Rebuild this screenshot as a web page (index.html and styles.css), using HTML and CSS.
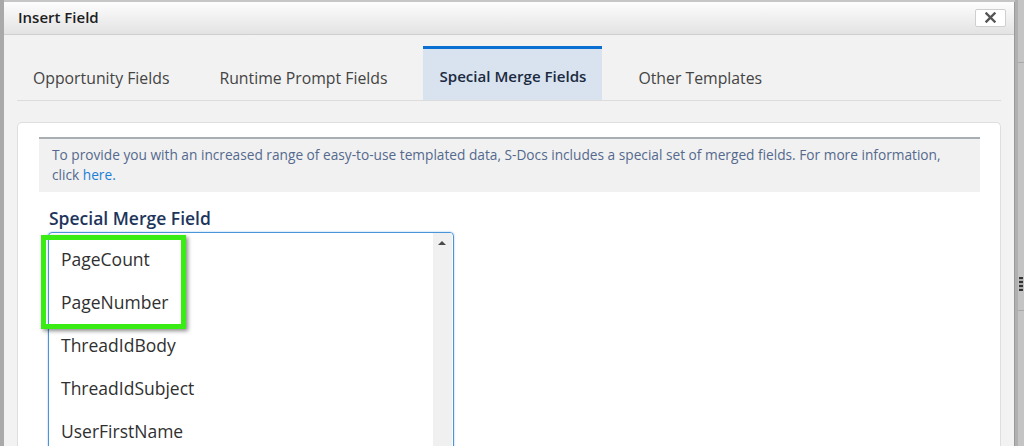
FILE: index.html
```html
<!DOCTYPE html>
<html>
<head>
<meta charset="utf-8">
<link rel="stylesheet" href="styles.css">
</head>
<body>
<div class="edge-left"></div>
<div class="modal">
  <div class="modal-header">
    <span class="modal-title">Insert Field</span>
    <button class="close-btn" aria-label="Close">
      <svg width="11" height="11" viewBox="0 0 11 11"><path d="M1.5 1.5 L9.5 9.5 M9.5 1.5 L1.5 9.5" stroke="#555" stroke-width="2.4" stroke-linecap="square"/></svg>
    </button>
  </div>
  <div class="modal-body">
    <div class="tabs">
      <div class="tab">Opportunity Fields</div>
      <div class="tab">Runtime Prompt Fields</div>
      <div class="tab active">Special Merge Fields</div>
      <div class="tab">Other Templates</div>
    </div>
    <div class="card">
      <div class="info">To provide you with an increased range of easy-to-use templated data, S-Docs includes a special set of merged fields. For more information, click <a href="#" class="link">here.</a></div>
      <div class="field-label">Special Merge Field</div>
      <div class="select-wrap">
        <div class="select">
          <ul class="options">
            <li>PageCount</li>
            <li>PageNumber</li>
            <li>ThreadIdBody</li>
            <li>ThreadIdSubject</li>
            <li>UserFirstName</li>
          </ul>
          <div class="scrollbar"><span class="arrow-up"></span></div>
        </div>
        <div class="highlight"></div>
      </div>
    </div>
  </div>
</div>
<div class="edge-right">
  <div class="er-line er-l1"></div>
  <div class="er-grip"></div>
  <div class="er-line er-l2"></div>
</div>
</body>
</html>
```
FILE: styles.css
```css
* { box-sizing: border-box; }
html, body { margin: 0; padding: 0; height: 100%; overflow: hidden; }
body {
  display: flex;
  background: #c6c6c6;
  font-family: "Open Sans", "Noto Sans", sans-serif;
}
.edge-left { width: 4px; background: #a9a9a9; flex: none; }
.modal {
  width: 1011px;
  flex: none;
  margin-top: 2px;
  background: #f2f2f2;
  border-right: 1px solid #9a9a9a;
  overflow: hidden;
}
.modal-header {
  height: 33px;
  display: flex;
  align-items: center;
  justify-content: space-between;
  padding: 0 8px 0 14px;
  background: linear-gradient(#fdfdfd, #e3e3e3);
  border-bottom: 1px solid #cfcfcf;
}
.modal-title { font-size: 15px; font-weight: 600; color: #1e1e1e; margin-top: -2px; }
.close-btn {
  width: 31px; height: 18px;
  margin-top: -1px;
  border: 1px solid #cfcfcf;
  border-radius: 2px;
  background: #fff;
  display: flex; align-items: center; justify-content: center;
  padding: 0;
}
.modal-body { padding: 11px 13px 0 13px; }
.tabs {
  display: flex;
  gap: 18px;
  border-bottom: 1px solid #dcdcdc;
  height: 55px;
}
.tab {
  padding: 6px 16px 0 16px;
  display: flex;
  align-items: center;
  font-size: 15.8px;
  color: #444;
  border-top: 3px solid transparent;
}
.tab.active {
  background: #d8e3ef;
  border-top-color: #0a6fd1;
  padding-top: 3px;
  color: #1b2a40;
  font-weight: 600;
  font-size: 15.1px;
  margin-left: 2px;
  margin-right: 2px;
}
.card {
  margin-top: 21px;
  background: #fff;
  border: 1px solid #dedede;
  border-bottom: none;
  border-radius: 5px 5px 0 0;
  padding: 14px 20px 0 21px;
  height: 330px;
}
.info {
  background: #f1f1f1;
  border-top: 2px solid #a9aeb3;
  padding: 6px 13px 7px 13px;
  font-size: 13.7px;
  line-height: 20px;
  color: #54698d;
}
.link { color: #1b7fd6; text-decoration: none; }
.field-label {
  margin: 16px 0 0 10px;
  font-size: 17.5px;
  font-weight: 600;
  color: #1e355b;
  line-height: 20px;
}
.select-wrap { position: relative; margin: 4px 0 0 9px; width: 406px; }
.select {
  display: flex;
  height: 260px;
  border: 1px solid #4a95da;
  border-radius: 4px 4px 0 0;
  box-shadow: 0 0 2px #8dbbe8;
  overflow: hidden;
}
.options {
  list-style: none;
  margin: 0;
  padding: 5px 0 0 12px;
  flex: 1;
  font-size: 17.5px;
  color: #303030;
}
.options li { height: 43px; line-height: 43px; }
.scrollbar {
  width: 19px;
  margin-right: 1px;
  background: #f0f0f0;
  position: relative;
}
.arrow-up {
  position: absolute;
  top: 8px; left: 5px;
  width: 0; height: 0;
  border-left: 4px solid transparent;
  border-right: 4px solid transparent;
  border-bottom: 4px solid #4a4a4a;
}
.highlight {
  position: absolute;
  left: -7px;
  top: 3px;
  width: 145px;
  height: 94px;
  border: 5px solid #39ec14;
  box-shadow: 2px 2px 4px rgba(0,0,0,0.45);
  pointer-events: none;
}
.edge-right {
  flex: 1;
  position: relative;
  background: #c4c4c4;
  border-left: 3px solid #b0b0b0;
}
.er-line { position: absolute; left: 0; right: 0; height: 1px; background: #a9a9a9; }
.er-l1 { top: 62px; }
.er-l2 { top: 310px; }
.er-grip {
  position: absolute;
  top: 277px; left: 1px;
  width: 4px; height: 14px;
  background: repeating-linear-gradient(#333 0 2px, #aaa 2px 4px);
}
```
